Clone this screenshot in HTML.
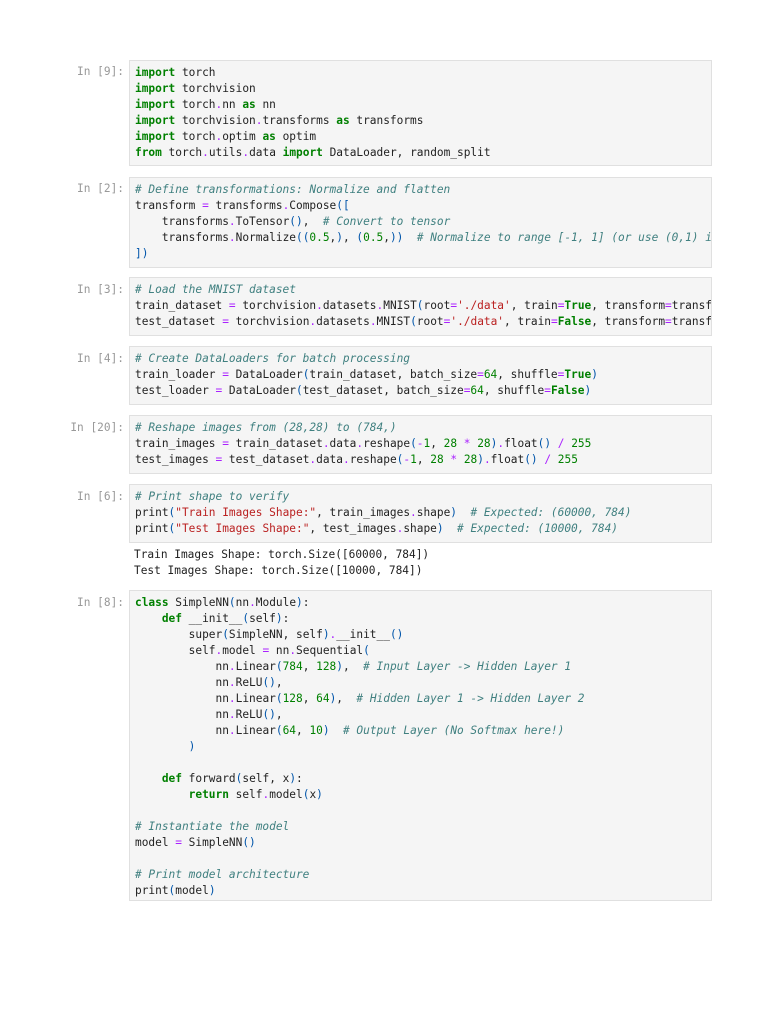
<html><head><style>
body{margin:0;background:#fff;width:768px;height:1024px;position:relative;overflow:hidden;font-family:"DejaVu Sans Mono","Liberation Mono",monospace;font-size:11.15px;}
.p{position:absolute;right:644px;color:#999;line-height:16px;white-space:pre;}
.c{position:absolute;left:129px;width:576px;background:#f5f5f5;border:1px solid #e0e0e0;padding:4px 0 4px 5px;line-height:16px;white-space:pre;overflow:hidden;color:#222;}
.o{position:absolute;left:134px;line-height:16px;white-space:pre;color:#222;}
.k{color:#008000;font-weight:bold}.m{color:#408080;font-style:italic}.op{color:#aa22ff}.n{color:#008000}.s{color:#ba2121}.b{color:#0055aa}
</style></head><body>
<div class="p" style="top:64px">In [9]:</div>
<div class="c" style="top:60px;height:96px"><span class="k">import</span> torch
<span class="k">import</span> torchvision
<span class="k">import</span> torch<span class="op">.</span>nn <span class="k">as</span> nn
<span class="k">import</span> torchvision<span class="op">.</span>transforms <span class="k">as</span> transforms
<span class="k">import</span> torch<span class="op">.</span>optim <span class="k">as</span> optim
<span class="k">from</span> torch<span class="op">.</span>utils<span class="op">.</span>data <span class="k">import</span> DataLoader, random_split</div>

<div class="p" style="top:181px">In [2]:</div>
<div class="c" style="top:177px;height:81px"><span class="m"># Define transformations: Normalize and flatten</span>
transform <span class="op">=</span> transforms<span class="op">.</span>Compose<span class="b">([</span>
    transforms<span class="op">.</span>ToTensor<span class="b">()</span>,  <span class="m"># Convert to tensor</span>
    transforms<span class="op">.</span>Normalize<span class="b">((</span><span class="n">0.5</span>,<span class="b">)</span>, <span class="b">(</span><span class="n">0.5</span>,<span class="b">))</span>  <span class="m"># Normalize to range [-1, 1] (or use (0,1) if needed)</span>
<span class="b">])</span></div>

<div class="p" style="top:282px">In [3]:</div>
<div class="c" style="top:277px;height:49px"><span class="m"># Load the MNIST dataset</span>
train_dataset <span class="op">=</span> torchvision<span class="op">.</span>datasets<span class="op">.</span>MNIST<span class="b">(</span>root<span class="op">=</span><span class="s">'./data'</span>, train<span class="op">=</span><span class="k">True</span>, transform<span class="op">=</span>transform, download<span class="op">=</span><span class="k">True</span><span class="b">)</span>
test_dataset <span class="op">=</span> torchvision<span class="op">.</span>datasets<span class="op">.</span>MNIST<span class="b">(</span>root<span class="op">=</span><span class="s">'./data'</span>, train<span class="op">=</span><span class="k">False</span>, transform<span class="op">=</span>transform, download<span class="op">=</span><span class="k">True</span><span class="b">)</span></div>

<div class="p" style="top:351px">In [4]:</div>
<div class="c" style="top:346px;height:49px"><span class="m"># Create DataLoaders for batch processing</span>
train_loader <span class="op">=</span> DataLoader<span class="b">(</span>train_dataset, batch_size<span class="op">=</span><span class="n">64</span>, shuffle<span class="op">=</span><span class="k">True</span><span class="b">)</span>
test_loader <span class="op">=</span> DataLoader<span class="b">(</span>test_dataset, batch_size<span class="op">=</span><span class="n">64</span>, shuffle<span class="op">=</span><span class="k">False</span><span class="b">)</span></div>

<div class="p" style="top:420px">In [20]:</div>
<div class="c" style="top:415px;height:49px"><span class="m"># Reshape images from (28,28) to (784,)</span>
train_images <span class="op">=</span> train_dataset<span class="op">.</span>data<span class="op">.</span>reshape<span class="b">(</span><span class="op">-</span><span class="n">1</span>, <span class="n">28</span> <span class="op">*</span> <span class="n">28</span><span class="b">)</span><span class="op">.</span>float<span class="b">()</span> <span class="op">/</span> <span class="n">255</span>
test_images <span class="op">=</span> test_dataset<span class="op">.</span>data<span class="op">.</span>reshape<span class="b">(</span><span class="op">-</span><span class="n">1</span>, <span class="n">28</span> <span class="op">*</span> <span class="n">28</span><span class="b">)</span><span class="op">.</span>float<span class="b">()</span> <span class="op">/</span> <span class="n">255</span></div>

<div class="p" style="top:489px">In [6]:</div>
<div class="c" style="top:484px;height:49px"><span class="m"># Print shape to verify</span>
print<span class="b">(</span><span class="s">"Train Images Shape:"</span>, train_images<span class="op">.</span>shape<span class="b">)</span>  <span class="m"># Expected: (60000, 784)</span>
print<span class="b">(</span><span class="s">"Test Images Shape:"</span>, test_images<span class="op">.</span>shape<span class="b">)</span>  <span class="m"># Expected: (10000, 784)</span></div>
<div class="o" style="top:547px">Train Images Shape: torch.Size([60000, 784])
Test Images Shape: torch.Size([10000, 784])</div>

<div class="p" style="top:595px">In [8]:</div>
<div class="c" style="top:590px;height:301px"><span class="k">class</span> SimpleNN<span class="b">(</span>nn<span class="op">.</span>Module<span class="b">)</span>:
    <span class="k">def</span> __init__<span class="b">(</span>self<span class="b">)</span>:
        super<span class="b">(</span>SimpleNN, self<span class="b">)</span><span class="op">.</span>__init__<span class="b">()</span>
        self<span class="op">.</span>model <span class="op">=</span> nn<span class="op">.</span>Sequential<span class="b">(</span>
            nn<span class="op">.</span>Linear<span class="b">(</span><span class="n">784</span>, <span class="n">128</span><span class="b">)</span>,  <span class="m"># Input Layer -> Hidden Layer 1</span>
            nn<span class="op">.</span>ReLU<span class="b">()</span>,
            nn<span class="op">.</span>Linear<span class="b">(</span><span class="n">128</span>, <span class="n">64</span><span class="b">)</span>,  <span class="m"># Hidden Layer 1 -> Hidden Layer 2</span>
            nn<span class="op">.</span>ReLU<span class="b">()</span>,
            nn<span class="op">.</span>Linear<span class="b">(</span><span class="n">64</span>, <span class="n">10</span><span class="b">)</span>  <span class="m"># Output Layer (No Softmax here!)</span>
        <span class="b">)</span>

    <span class="k">def</span> forward<span class="b">(</span>self, x<span class="b">)</span>:
        <span class="k">return</span> self<span class="op">.</span>model<span class="b">(</span>x<span class="b">)</span>

<span class="m"># Instantiate the model</span>
model <span class="op">=</span> SimpleNN<span class="b">()</span>

<span class="m"># Print model architecture</span>
print<span class="b">(</span>model<span class="b">)</span></div>
</body></html>
